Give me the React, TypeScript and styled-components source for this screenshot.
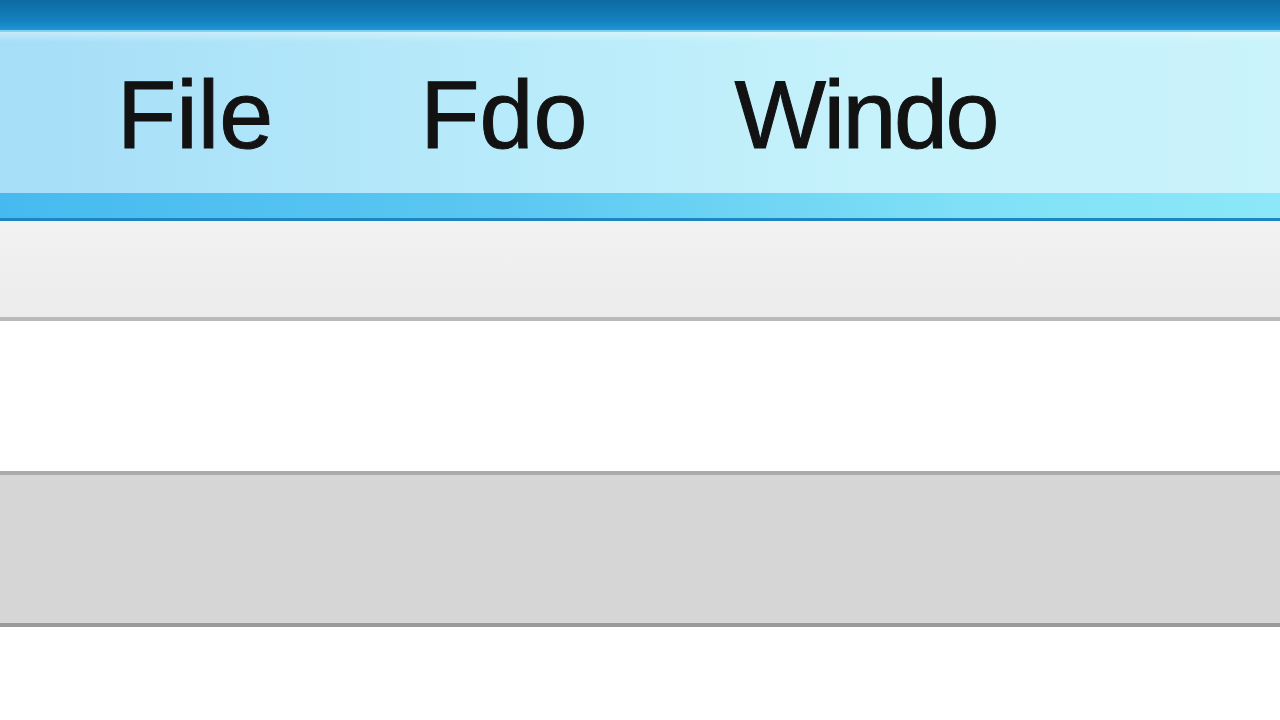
import React from 'react';
import styled, { createGlobalStyle } from 'styled-components';

const GlobalStyle = createGlobalStyle`
  html, body {
    margin: 0;
    padding: 0;
    background: #ffffff;
    font-family: 'Liberation Sans', Arial, sans-serif;
    overflow: hidden;
  }
`;

const Page = styled.div`
  width: 1280px;
  height: 720px;
  display: flex;
  flex-direction: column;
  background: #ffffff;
`;

const TitleBar = styled.div`
  height: 30px;
  background: linear-gradient(to bottom, #0d6ba3 0%, #1482bf 70%, #1e97d4 100%);
  border-bottom: 2px solid #7fd2f2;
`;

const MenuBar = styled.div`
  height: 161px;
  box-sizing: border-box;
  display: flex;
  align-items: center;
  gap: 147px;
  padding: 3px 0 0 117px;
  background:
    linear-gradient(to bottom, rgba(255, 255, 255, 0.35) 0px, rgba(255, 255, 255, 0) 10px),
    linear-gradient(to right, #a6def8 0%, #b8ebfa 40%, #c6f2fb 70%, #caf3fb 100%);
`;

const MenuItem = styled.span<{ $spacing?: number }>`
  font-size: 97px;
  color: #121212;
  line-height: 1;
  letter-spacing: ${p => p.$spacing ?? 0}px;
  -webkit-text-stroke: 1px #121212;
`;

const AccentStrip = styled.div`
  height: 25px;
  background: linear-gradient(to right, #46baf0 0%, #5cc8f2 40%, #7fe0f6 75%, #8ce8f8 100%);
  border-bottom: 3px solid #1c86c2;
`;

const ToolBar = styled.div`
  height: 96px;
  background: linear-gradient(to bottom, #f2f2f2 0%, #ececec 100%);
  border-bottom: 4px solid #b9b9b9;
`;

const Blank = styled.div<{ $h: number }>`
  height: ${p => p.$h}px;
  background: #ffffff;
`;

const StatusBar = styled.div`
  height: 148px;
  background: #d6d6d6;
  border-top: 4px solid #ababab;
  border-bottom: 4px solid #9a9a9a;
`;

const menus = [
  { label: 'File', spacing: 0 },
  { label: 'Fdo', spacing: 0 },
  { label: 'Windo', spacing: -2.5 },
];

const App: React.FC = () => (
  <>
    <GlobalStyle />
    <Page>
      <TitleBar />
      <MenuBar>
        {menus.map(m => (
          <MenuItem key={m.label} $spacing={m.spacing}>
            {m.label}
          </MenuItem>
        ))}
      </MenuBar>
      <AccentStrip />
      <ToolBar />
      <Blank $h={150} />
      <StatusBar />
      <Blank $h={92} />
    </Page>
  </>
);

export default App;
